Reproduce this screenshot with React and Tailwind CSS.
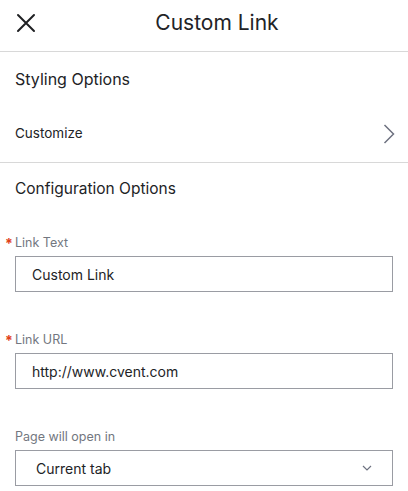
export default function App() {
  const font = { fontFamily: 'Inter, Roboto, "Noto Sans", sans-serif' };
  return (
    <div className="w-[408px] h-[491px] bg-white text-[#222326] overflow-hidden" style={font}>
      <div className="relative h-[52px] flex items-center justify-center border-b border-[#d8d8d8]">
        <svg className="absolute left-[16px] top-[13px]" width="20" height="20" viewBox="0 0 20 20">
          <path d="M2 2 L18 18 M18 2 L2 18" stroke="#1f2023" strokeWidth="2" strokeLinecap="round" />
        </svg>
        <span className="text-[21px] leading-none pl-[26px] pb-[6px]">Custom Link</span>
      </div>
      <div className="h-[111px] border-b border-[#d8d8d8] px-[15px]">
        <div className="h-[54px] flex items-center text-[16px]">Styling Options</div>
        <div className="h-[56px] flex items-center justify-between text-[13.5px]">
          <span className="-mt-[1px]">Customize</span>
          <svg width="12" height="20" viewBox="0 0 12 20" className="mr-[-2px]">
            <path d="M1.5 1 L10.5 10 L1.5 19" fill="none" stroke="#6e7280" strokeWidth="1.5" />
          </svg>
        </div>
      </div>
      <div className="px-[15px]">
        <div className="h-[51px] flex items-center text-[15.5px]">Configuration Options</div>
        <div className="mt-[21px] relative">
          <span className="absolute left-[-10px] top-[2px] text-[#e0401a] text-[14px] leading-none font-bold">*</span>
          <div className="text-[12.5px] leading-[16px] text-[#737780]">Link Text</div>
        </div>
        <div className="mt-[5px] h-[36px] border border-[#9a9ca3] flex items-center pl-[16px] text-[14px]">Custom Link</div>
        <div className="mt-[40px] relative">
          <span className="absolute left-[-10px] top-[2px] text-[#e0401a] text-[14px] leading-none font-bold">*</span>
          <div className="text-[12.5px] leading-[16px] text-[#737780]">Link URL</div>
        </div>
        <div className="mt-[5px] h-[36px] border border-[#9a9ca3] flex items-center pl-[16px] text-[14px]">http://www.cvent.com</div>
        <div className="mt-[40px] text-[12.5px] leading-[16px] text-[#737780]">Page will open in</div>
        <div className="mt-[5px] h-[36px] border border-[#9a9ca3] flex items-center justify-between pl-[20px] pr-[20px] text-[14px]">
          <span>Current tab</span>
          <svg width="10" height="6" viewBox="0 0 10 6">
            <path d="M1 1 L5 5 L9 1" fill="none" stroke="#6e7280" strokeWidth="1.2" />
          </svg>
        </div>
      </div>
    </div>
  );
}
